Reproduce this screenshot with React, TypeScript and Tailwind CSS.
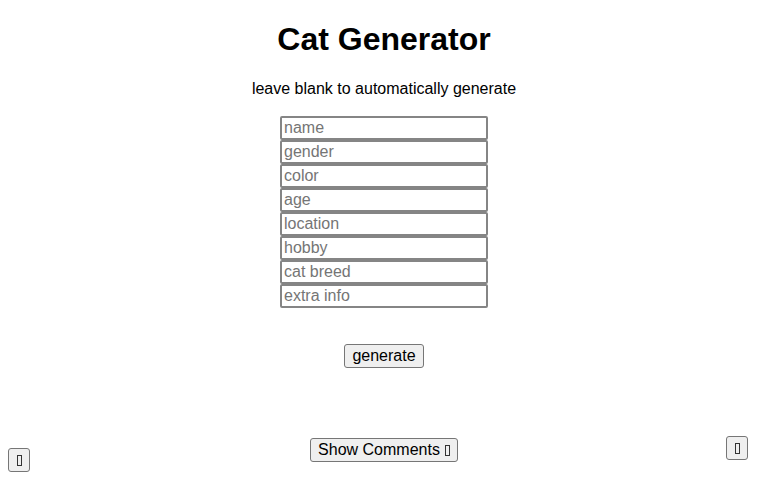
export default function App() {
  const fields = ['name', 'gender', 'color', 'age', 'location', 'hobby', 'cat breed', 'extra info']

  // missing-glyph box, as the original page shows for its icon characters
  const tofu = <span className="inline-block w-[5px] h-[11px] border border-[#333] align-[-1px]" />

  return (
    <div className="min-h-screen bg-white text-black font-['Liberation_Sans',Arial,sans-serif]">
      <div className="flex flex-col items-center text-center">
        <h1 className="mt-[21px] text-[32px] leading-[37px] font-bold">Cat Generator</h1>
        <p className="mt-[22px] text-base leading-[18px]">leave blank to automatically generate</p>

        <form className="mt-[18px] flex flex-col" onSubmit={e => e.preventDefault()}>
          {fields.map(f => (
            <input
              key={f}
              type="text"
              placeholder={f}
              className="w-[208px] h-[24px] px-[2px] text-base border-2 border-[#858585] rounded-[2px]
                         bg-white placeholder-[#757575] outline-none"
            />
          ))}
        </form>

        <button className="mt-[36px] h-[24px] px-[7px] text-base leading-[18px] bg-[#efefef] border
                           border-[#767676] rounded-[3px]">
          generate
        </button>
      </div>

      <div className="mt-[68px] grid grid-cols-[1fr_auto_1fr] items-start">
        <div className="flex justify-start pl-2">
          <button className="mt-[12px] w-[22px] h-[24px] flex items-center justify-center bg-[#efefef]
                             border border-[#767676] rounded-[3px]">
            {tofu}
          </button>
        </div>
        <button className="mt-[2px] h-[24px] w-[148px] flex items-center justify-center gap-[5px] text-base
                           leading-[18px] whitespace-nowrap bg-[#efefef] border border-[#767676] rounded-[3px]">
          Show Comments {tofu}
        </button>
        <div className="flex justify-end pr-5">
          <button className="w-[22px] h-[24px] flex items-center justify-center bg-[#efefef]
                             border border-[#767676] rounded-[3px]">
            {tofu}
          </button>
        </div>
      </div>
    </div>
  )
}
